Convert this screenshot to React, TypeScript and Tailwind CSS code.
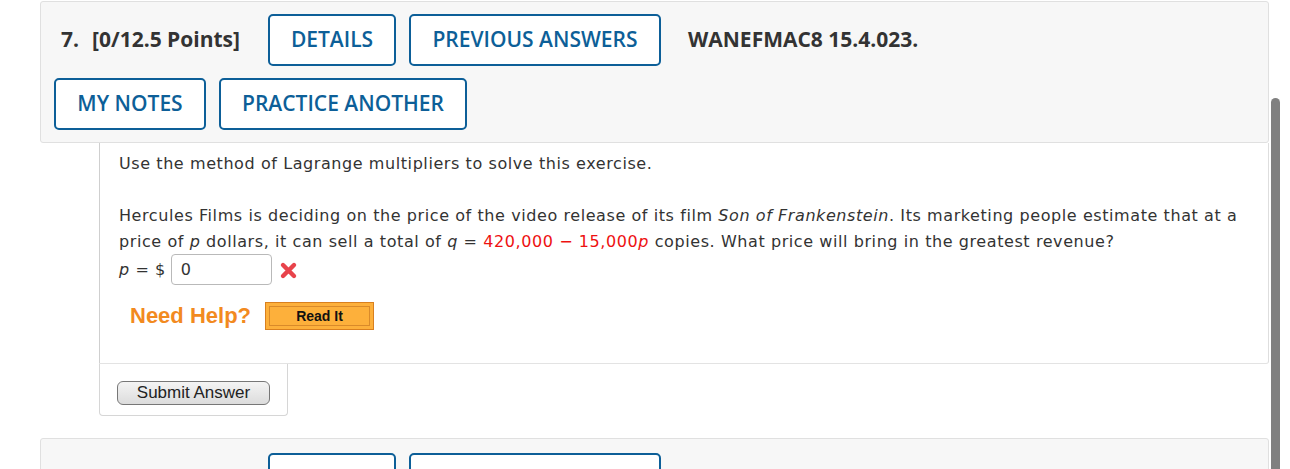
import React from 'react';

const OPEN = { fontFamily: '"Open Sans", "Liberation Sans", sans-serif' };
const VERD = { fontFamily: '"DejaVu Sans", Verdana, sans-serif' };
const ARIAL = { fontFamily: '"Liberation Sans", Arial, sans-serif' };

const OutlineButton: React.FC<{ label: string; width: string }> = ({ label, width }) => (
  <button
    className={`h-[52px] ${width} rounded-[5px] border-2 border-[#0d5f98] bg-white text-[21px] font-semibold text-[#0d5f98] flex items-center justify-center`}
    style={OPEN}
  >
    {label}
  </button>
);

const RedCross = () => (
  <svg width="19" height="19" viewBox="0 0 19 19" className="ml-[7px] mt-[2px]">
    <path d="M4 4 L15 15 M15 4 L4 15" stroke="#e8434b" strokeWidth="4.4" strokeLinecap="round" />
  </svg>
);

export default function App() {
  return (
    <div className="relative h-[469px] w-[1290px] overflow-hidden bg-white">
      <div className="pl-[40px] pt-[1px] w-[1269px]">
        {/* question header */}
        <div className="rounded-[3px] border border-[#e0e0e0] bg-[#f7f7f7] px-[13px] pt-[12px] pb-[12px]">
          <div className="flex items-center">
            <div className="ml-[7px] w-[207px] flex text-[21px] font-bold text-[#333]" style={OPEN}>
              <span>7.</span>
              <span className="ml-[13px]">[0/12.5 Points]</span>
            </div>
            <OutlineButton label="DETAILS" width="w-[128px]" />
            <div className="ml-[13px]">
              <OutlineButton label="PREVIOUS ANSWERS" width="w-[252px]" />
            </div>
            <div className="ml-[27px] text-[21px] font-bold text-[#333]" style={OPEN}>
              WANEFMAC8 15.4.023.
            </div>
          </div>
          <div className="mt-[12px] flex items-center gap-[13px]">
            <OutlineButton label="MY NOTES" width="w-[152px]" />
            <OutlineButton label="PRACTICE ANOTHER" width="w-[248px]" />
          </div>
        </div>

        {/* question body */}
        <div className="ml-[59px]">
          <div className="rounded-br-[3px] border-x border-b border-l-[#cfcfcf] border-r-[#dedede] border-b-[#e3e3e3] bg-white pl-[19px] pt-[8px] pb-[33px] text-[16px] leading-[26px] text-[#333]" style={VERD}>
            <div className="tracking-[0.58px]">
              <div>Use the method of Lagrange multipliers to solve this exercise.</div>
              <div className="h-[27px]" />
              <div className="-mt-[1px]">
                Hercules Films is deciding on the price of the video release of its film <i>Son of Frankenstein</i>. Its marketing people estimate that at a
              </div>
              <div>
                price of <i>p</i> dollars, it can sell a total of <i>q</i> = <span className="text-[#ee1111]">420,000 − 15,000<i>p</i></span> copies. What price will bring in the greatest revenue?
              </div>
              <div className="-mt-[1px] flex items-center">
                <span><i>p</i> = $</span>
                <input
                  readOnly
                  value="0"
                  className="ml-[5px] h-[31px] w-[101px] rounded-[4px] border border-[#b9b9b9] bg-white pl-[9px] text-[16px] text-[#333] outline-none"
                  style={VERD}
                />
                <RedCross />
              </div>
            </div>
            <div className="mt-[17px] flex items-center pl-[11px]">
              <span className="text-[22px] font-bold text-[#f28a1f]" style={ARIAL}>
                Need Help?
              </span>
              <div className="ml-[14px] h-[28px] w-[109px] border border-[#d9801f] bg-[#fdb03b] p-[3px]">
                <div className="flex h-full w-full items-center justify-center border border-[#d98a2a] text-[14px] font-bold text-[#111]" style={ARIAL}>
                  Read It
                </div>
              </div>
            </div>
          </div>
          <div className="w-[189px] rounded-b-[4px] border-x border-b border-[#d6d6d6] bg-white pt-[16px] pb-[10px] pl-[17px]">
            <button
              className="h-[24px] w-[153px] rounded-[6px] border border-[#777] bg-gradient-to-b from-[#f4f4f4] to-[#dcdcdc] text-[17px] leading-[20px] text-[#222]"
              style={ARIAL}
            >
              Submit Answer
            </button>
          </div>
        </div>

        {/* next question header */}
        <div className="mt-[22px] rounded-t-[3px] border border-[#e0e0e0] bg-[#f7f7f7] px-[13px] pt-[14px] h-[60px]">
          <div className="flex items-center">
            <div className="ml-[7px] w-[207px]" />
            <OutlineButton label="" width="w-[128px]" />
            <div className="ml-[13px]">
              <OutlineButton label="" width="w-[252px]" />
            </div>
          </div>
        </div>
      </div>

      {/* overlay scrollbar */}
      <div className="absolute left-[1271px] top-[98px] h-[400px] w-[9px] rounded-t-full bg-[#808080]" />
    </div>
  );
}
